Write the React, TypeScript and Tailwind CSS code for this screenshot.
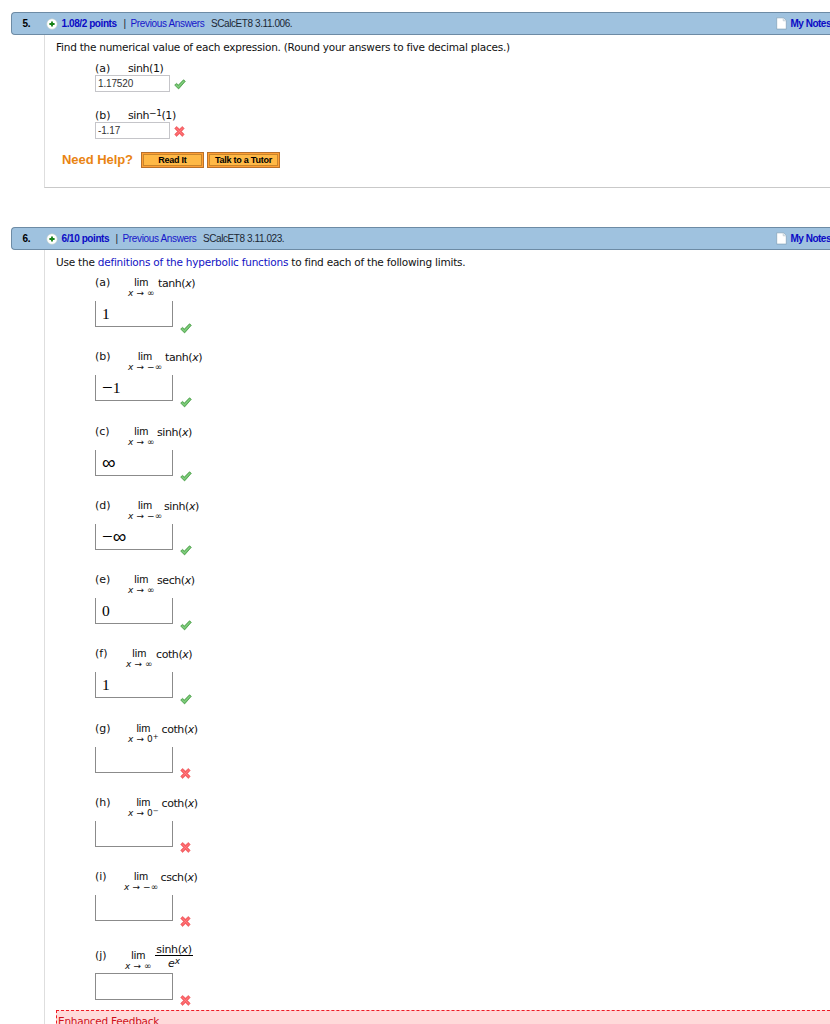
import type { ReactNode } from 'react';

interface LimitPart {
  label: string;
  target: ReactNode;
  fn: string;
  answer: string;
  correct: boolean;
  labelWidth: string;
  limitWidth: string;
}

const parts: LimitPart[] = [
  { label: '(a)', target: '∞', fn: 'tanh', answer: '1', correct: true, labelWidth: 'w-[33px]', limitWidth: 'w-[30px]' },
  { label: '(b)', target: '−∞', fn: 'tanh', answer: '−1', correct: true, labelWidth: 'w-[33px]', limitWidth: 'w-[37px]' },
  { label: '(c)', target: '∞', fn: 'sinh', answer: '∞', correct: true, labelWidth: 'w-[33px]', limitWidth: 'w-[29px]' },
  { label: '(d)', target: '−∞', fn: 'sinh', answer: '−∞', correct: true, labelWidth: 'w-[33px]', limitWidth: 'w-[36px]' },
  { label: '(e)', target: '∞', fn: 'sech', answer: '0', correct: true, labelWidth: 'w-[33px]', limitWidth: 'w-[29px]' },
  { label: '(f)', target: '∞', fn: 'coth', answer: '1', correct: true, labelWidth: 'w-[31px]', limitWidth: 'w-[30px]' },
  { label: '(g)', target: <>0<Sup>+</Sup></>, fn: 'coth', answer: '', correct: false, labelWidth: 'w-[33px]', limitWidth: 'w-[33.5px]' },
  { label: '(h)', target: <>0<Sup>−</Sup></>, fn: 'coth', answer: '', correct: false, labelWidth: 'w-[33px]', limitWidth: 'w-[33.5px]' },
  { label: '(i)', target: '−∞', fn: 'csch', answer: '', correct: false, labelWidth: 'w-[29px]', limitWidth: 'w-[36.5px]' },
];

function Sup({ children }: { children: ReactNode }) {
  return <span className="relative -top-[3px] text-[7px]">{children}</span>;
}

function Mark({ correct }: { correct: boolean }) {
  if (correct) {
    return (
      <svg width="12" height="11" viewBox="0 0 12 11" className="block shrink-0">
        <path d="M.7 6.1 2.5 4.4 4.4 6.1 9.5.8 11.3 2.3 4.6 9.9Z" fill="#6cc069" stroke="#479a45" strokeWidth=".8" />
        <path d="m2.2 6.1 2.2 1.9 5.3-5.7" fill="none" stroke="#91d58d" strokeWidth=".8" />
      </svg>
    );
  }
  return (
    <svg width="12" height="11" viewBox="0 0 12 11" className="block shrink-0">
      <path d="M2.5.4 5.5 3.1 8.4.4 10.2 2.5 7.5 5.4l2.7 2.9-1.8 2.2-2.9-2.8-3 2.8L.7 8.3l2.8-2.9L.7 2.5Z" fill="#fa5f63" stroke="#ea5a5e" strokeWidth=".6" />
      <path d="m2.4 2.4 6.1 6.1m0-6.1L2.4 8.5" stroke="#ff8589" strokeWidth=".7" />
    </svg>
  );
}

function QuestionHeader({ number, points, code, pointsWidth }: { number: string; points: string; code: string; pointsWidth: string }) {
  return (
    <div className="ml-[10.5px] flex h-[23px] items-center rounded-l-[4px] border border-r-0 border-[#6d8ba5] bg-[#9fc2df] font-['Liberation_Sans',Arial,sans-serif] text-[10px] leading-3 tracking-[-0.42px] whitespace-nowrap text-[#1b2733]">
      <span className="ml-[11px] w-[23px] font-bold tracking-[-0.2px] text-black">{number}</span>
      <svg width="12" height="12" viewBox="0 0 12 12" className="mr-[4px] shrink-0">
        <circle cx="6" cy="6" r="5.2" fill="#fff" stroke="#c4d2cb" strokeWidth=".6" />
        <path d="M6 3.4v5.2M3.4 6h5.2" stroke="#168216" strokeWidth="1.8" />
      </svg>
      <span className={`${pointsWidth} shrink-0 font-bold text-[#0b0bc5]`}>{points}</span>
      <span className="w-[7px]">|</span>
      <span className="w-[80.5px] tracking-[-0.35px] text-[#1616ca]">Previous Answers</span>
      <span>{code}</span>
      <span className="ml-auto flex w-[54px] shrink-0 items-center">
        <svg width="11" height="13" viewBox="0 0 11 13" className="mr-[3.5px] shrink-0">
          <path d="M.7.8H7.5L10.3 3.5V12.1H.7Z" fill="#fff" stroke="#86a5bd" strokeWidth=".8" />
          <path d="M7.2 1v2.8h2.9" fill="#e3e9ee" stroke="#b7c5cf" strokeWidth=".7" />
        </svg>
        <span className="font-bold tracking-[-0.5px] text-[#0b0bc5]">My Notes</span>
      </span>
    </div>
  );
}

function Limit({ target }: { target: ReactNode }) {
  return (
    <span className="inline-flex flex-col items-center whitespace-nowrap">
      <span className="h-[12px] font-['Liberation_Sans',Arial,sans-serif] text-[11px] leading-[14px]">lim</span>
      <span className="h-[10px] text-[9px] leading-[12px] tracking-[0.1px]">
        <i>x</i> → {target}
      </span>
    </span>
  );
}

function AnswerGlyph({ char }: { char: string }) {
  if (char === '∞') {
    return <span className="font-['DejaVu_Sans',sans-serif] text-[19px] font-extralight">∞</span>;
  }
  if (char === '−') {
    return <span className="text-[19px]">−</span>;
  }
  return <span className="text-[15.5px]">{char}</span>;
}

function AnswerBox({ answer = '', closed = false }: { answer?: string; closed?: boolean }) {
  return (
    <div className={`flex w-[78px] items-center border border-[#8b8b8b] pl-[6px] font-['Liberation_Serif',serif] leading-none text-black ${closed ? 'h-[27px]' : 'h-[26px] border-t-0'}`}>
      {[...answer].map((char) => <AnswerGlyph key={char} char={char} />)}
    </div>
  );
}

function LimitRow({ part }: { part: LimitPart }) {
  return (
    <div className="h-[74.23px] pl-[50px]">
      <div className="flex h-[26px]">
        <span className={`${part.labelWidth} shrink-0 leading-[16px]`}>{part.label}</span>
        <span className={`${part.limitWidth} shrink-0`}><Limit target={part.target} /></span>
        <span className="leading-[18px] tracking-[-0.42px]">{part.fn}(<i>x</i>)</span>
      </div>
      <div className="flex">
        <AnswerBox answer={part.answer} />
        <span className="mt-[21.5px] ml-[7px]"><Mark correct={part.correct} /></span>
      </div>
    </div>
  );
}

function ValueRow({ label, expression, value, correct }: { label: string; expression: ReactNode; value: string; correct: boolean }) {
  return (
    <div className="h-[47px] pl-[50px]">
      <div className="flex h-[14px] leading-[15px]">
        <span className="w-[33px]">{label}</span>
        <span className="tracking-[-0.42px]">{expression}</span>
      </div>
      <div className="flex">
        <div className="h-[17px] w-[75px] border border-[#c5c5c9] pl-[2px] font-['Liberation_Sans',Arial,sans-serif] text-[10px] leading-[15px] tracking-[-0.15px] text-[#333]">{value}</div>
        <span className="mt-[4px] ml-[4px]"><Mark correct={correct} /></span>
      </div>
    </div>
  );
}

function HelpButton({ children, width }: { children: string; width: string }) {
  return (
    <button className={`${width} h-4 border border-[#b8712b] bg-[#ff9f35] p-[1px] font-['Liberation_Sans',Arial,sans-serif] text-[9px] font-bold tracking-[-0.25px] text-black`}>
      <span className="flex h-3 items-center justify-center border border-[#c9862d] bg-[#ffb946] leading-none whitespace-nowrap">{children}</span>
    </button>
  );
}

export default function App() {
  return (
    <main className="h-[1024px] w-[830px] overflow-hidden bg-white pt-3 font-['DejaVu_Sans',Verdana,sans-serif] text-[11px] leading-[14px] text-[#111]">
      <section className="h-[215px]">
        <QuestionHeader number="5." points="1.08/2 points" code="SCalcET8 3.11.006." pointsWidth="w-[62px]" />
        <div className="ml-[44px] h-[153px] border-b border-l border-[#c9c9c9] border-l-[#dedede] pt-[5px]">
          <p className="h-[21px] pl-[11px] text-[10.5px] tracking-[-0.24px] whitespace-nowrap">Find the numerical value of each expression. (Round your answers to five decimal places.)</p>
          <ValueRow label="(a)" expression="sinh(1)" value="1.17520" correct />
          <ValueRow label="(b)" expression={<>sinh<span className="relative -top-[3px] text-[9px]">−1</span>(1)</>} value="-1.17" correct={false} />
          <div className="-mt-[3px] flex items-center pl-[17px] font-['Liberation_Sans',Arial,sans-serif]">
            <span className="w-[79px] text-[13px] leading-4 font-bold tracking-[-0.05px] text-[#e98412]">Need Help?</span>
            <HelpButton width="w-[63px]">Read It</HelpButton>
            <span className="w-[3px]" />
            <HelpButton width="w-[73px]">Talk to a Tutor</HelpButton>
          </div>
        </div>
      </section>

      <section>
        <QuestionHeader number="6." points="6/10 points" code="SCalcET8 3.11.023." pointsWidth="w-[54px]" />
        <div className="ml-[44px] h-[774px] border-l border-[#dedede] pt-[5px]">
          <p className="h-[20.2px] pl-[11px] text-[10.5px] tracking-[-0.22px] whitespace-nowrap">
            Use the <span className="text-[#1212c4]">definitions of the hyperbolic functions</span> to find each of the following limits.
          </p>
          {parts.map((part) => <LimitRow key={part.label} part={part} />)}

          {/* The last limit is set as a fraction */}
          <div className="h-[66.7px] pl-[50px]">
            <div className="flex h-[29.7px]">
              <span className="w-[30px] shrink-0 pt-[6px]">(j)</span>
              <span className="w-[30px] shrink-0 pt-[5px]"><Limit target="∞" /></span>
              <span className="flex w-[38px] flex-col items-center whitespace-nowrap">
                <span className="h-[13px] w-full border-b border-black text-center leading-[14px] tracking-[-0.35px]">sinh(<i>x</i>)</span>
                <i className="leading-[15px]">e<span className="relative -top-[3px] text-[9px]">x</span></i>
              </span>
            </div>
            <div className="flex">
              <AnswerBox closed />
              <span className="mt-[22px] ml-[7px]"><Mark correct={false} /></span>
            </div>
          </div>
          <div className="ml-[11px] h-10 border border-r-0 border-dashed border-[#ee1c25] bg-[#ffdada] pt-[3px] pl-[1px] text-[10.5px] tracking-[-0.24px] text-[#cf101b]">
            Enhanced Feedback
          </div>
        </div>
      </section>
    </main>
  );
}
